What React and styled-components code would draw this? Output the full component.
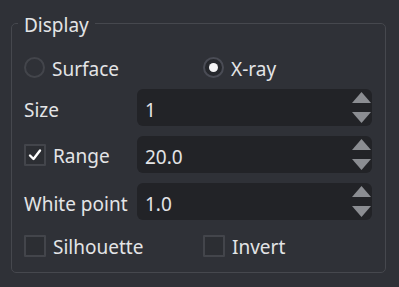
import React from "react";
import styled, { createGlobalStyle } from "styled-components";

const Global = createGlobalStyle`
  html, body { margin: 0; padding: 0; background: #2f3137; }
  body { font-family: "Noto Sans", "Open Sans", sans-serif; color: #e3e4e6; }
  * { box-sizing: border-box; }
`;

const Page = styled.div`
  width: 399px;
  height: 287px;
  padding: 10px 0 0 11px;
  background: #2f3137;
`;

const Group = styled.fieldset`
  margin: 0;
  width: 375px;
  height: 263px;
  padding: 0 13px 0 12px;
  border: 1px solid #46484e;
  border-radius: 5px;
  min-width: 0;
`;

const Legend = styled.legend`
  margin-left: -6px;
  padding: 4px 6px 0;
  font-size: 19px;
  line-height: 22px;
  color: #e3e4e6;
`;

const Body = styled.div`
  display: flex;
  flex-direction: column;
  gap: 10px;
  padding-top: 19px;
`;

const TwoCols = styled.div`
  display: grid;
  grid-template-columns: 169px 1fr;
  column-gap: 10px;
  height: 21px;
  margin-bottom: ${(p) => p.$mb || 0}px;
  margin-top: ${(p) => p.$mt || 0}px;
`;

const Option = styled.label`
  display: flex;
  align-items: center;
  gap: 7px;
  font-size: 19px;
  line-height: 21px;
  white-space: nowrap;
  padding-top: 4px;
`;

const Radio = styled.span`
  width: 21px;
  height: 21px;
  margin-top: -4px;
  border-radius: 50%;
  border: 2px solid ${(p) => (p.$on ? "#4a4c55" : "#43454b")};
  background: ${(p) => (p.$on ? "#26282d" : "transparent")};
  display: flex;
  align-items: center;
  justify-content: center;
  flex: none;
  &::after {
    content: "";
    display: ${(p) => (p.$on ? "block" : "none")};
    width: 9px;
    height: 9px;
    border-radius: 50%;
    background: #f4f4f5;
  }
`;

const Box = styled.span`
  width: 22px;
  height: 22px;
  margin-top: -4px;
  border: 2px solid #43454b;
  border-radius: 1px;
  background: #2c2e33;
  display: flex;
  align-items: center;
  justify-content: center;
  flex: none;
`;

const FormRow = styled.div`
  display: grid;
  grid-template-columns: 113px 1fr;
  align-items: center;
  height: 37px;
`;

const Label = styled.span`
  font-size: 19px;
  white-space: nowrap;
  padding-top: 4px;
`;

const Spin = styled.div`
  height: 37px;
  background: #222327;
  border-radius: 6px;
  display: flex;
  align-items: center;
  justify-content: space-between;
  padding: 0 1px 0 8px;
  font-size: 19px;
  > span {
    padding-top: 4px;
  }
`;

const Arrows = styled.div`
  display: flex;
  flex-direction: column;
  justify-content: space-between;
  height: 31px;
`;

const Check = () => (
  <svg width="14" height="14" viewBox="0 0 14 14">
    <path d="M2 7.5 L5.5 11 L12 2.5" fill="none" stroke="#ffffff" strokeWidth="2.4" strokeLinecap="round" strokeLinejoin="round" />
  </svg>
);

const SpinBox = ({ value }) => (
  <Spin>
    <span>{value}</span>
    <Arrows>
      <svg width="19" height="11" viewBox="0 0 19 11">
        <path d="M9.5 0 L19 11 L0 11 Z" fill="#8b8d92" />
      </svg>
      <svg width="19" height="11" viewBox="0 0 19 11">
        <path d="M0 0 L19 0 L9.5 11 Z" fill="#8b8d92" />
      </svg>
    </Arrows>
  </Spin>
);

export default function App() {
  return (
    <>
      <Global />
      <Page>
        <Group>
          <Legend>Display</Legend>
          <Body>
            <TwoCols $mb={3}>
              <Option>
                <Radio />
                Surface
              </Option>
              <Option>
                <Radio $on />
                X-ray
              </Option>
            </TwoCols>
            <FormRow>
              <Label>Size</Label>
              <SpinBox value="1" />
            </FormRow>
            <FormRow>
              <Option>
                <Box>
                  <Check />
                </Box>
                Range
              </Option>
              <SpinBox value="20.0" />
            </FormRow>
            <FormRow>
              <Label>White point</Label>
              <SpinBox value="1.0" />
            </FormRow>
            <TwoCols $mt={3}>
              <Option>
                <Box />
                Silhouette
              </Option>
              <Option>
                <Box />
                Invert
              </Option>
            </TwoCols>
          </Body>
        </Group>
      </Page>
    </>
  );
}
